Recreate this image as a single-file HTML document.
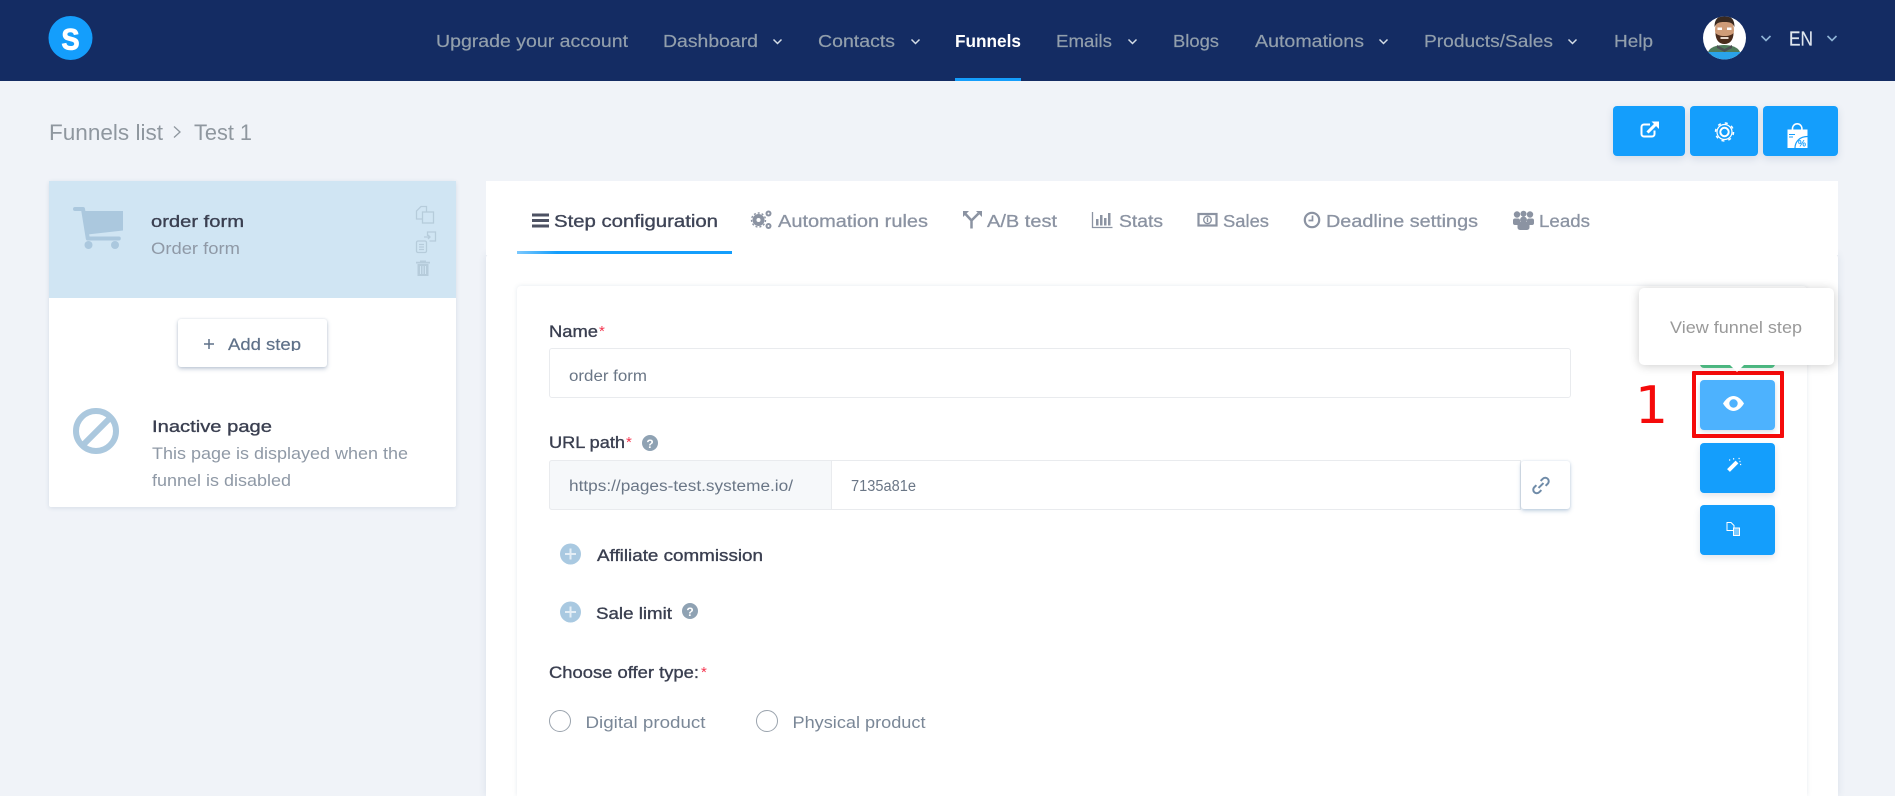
<!DOCTYPE html>
<html lang="en">
<head>
<meta charset="utf-8">
<title>Funnels - Test 1</title>
<style>
html,body{margin:0;padding:0;width:1895px;height:796px;overflow:hidden;background:#f0f3f8;font-family:"Liberation Sans",sans-serif}
#app{position:relative;width:1895px;height:796px;overflow:hidden;background:#f0f3f8}
.b{position:absolute;box-sizing:border-box}
svg{position:absolute;left:0;top:0}
text{font-family:"Liberation Sans",sans-serif}
.nv{font-size:17.5px;fill:#929fac;stroke:#929fac;stroke-width:.2}
.tb{font-size:17.5px;fill:#8b93a2;stroke:#8b93a2;stroke-width:.3}
.dk{font-size:17px;fill:#3a3f50;stroke:#3a3f50;stroke-width:.35}
.lt{font-size:16.5px;fill:#8f99a6}
.in{font-size:15.5px;fill:#6a7686}
.rq{font-size:15px;fill:#f5354f}
</style>
</head>
<body>
<div id="app">
<!-- nav -->
<div class="b" style="left:0;top:0;width:1895px;height:81px;background:#142c63"></div>
<div class="b" style="left:955px;top:78px;width:66px;height:3px;background:#149efc"></div>
<!-- top buttons -->
<div class="b" style="left:1613px;top:106px;width:72px;height:50px;background:#149efc;border-radius:4px;box-shadow:0 3px 8px rgba(60,90,130,.15)"></div>
<div class="b" style="left:1690px;top:106px;width:68px;height:50px;background:#149efc;border-radius:4px;box-shadow:0 3px 8px rgba(60,90,130,.15)"></div>
<div class="b" style="left:1763px;top:106px;width:75px;height:50px;background:#149efc;border-radius:4px;box-shadow:0 3px 8px rgba(60,90,130,.15)"></div>
<!-- left panel -->
<div class="b" style="left:49px;top:181px;width:407px;height:326px;background:#fff;border-radius:2px;box-shadow:0 1px 4px rgba(60,90,130,.14)"></div>
<div class="b" style="left:49px;top:181px;width:407px;height:117px;background:#d0e5f3"></div>
<div class="b" style="left:178px;top:319px;width:149px;height:48px;background:#fff;border-radius:3px;box-shadow:0 2px 4px rgba(60,90,130,.3),0 0 2px rgba(60,90,130,.15)"></div>
<!-- right panel -->
<div class="b" style="left:486px;top:254px;width:1352px;height:542px;background:#fff;border-radius:4px 4px 0 0;box-shadow:0 0 8px rgba(60,90,130,.12)"></div>
<div class="b" style="left:486px;top:181px;width:1352px;height:74px;background:#fff"></div>
<div class="b" style="left:517px;top:251px;width:215px;height:3px;background:linear-gradient(90deg,#7cc8fd 0,#149efc 40px)"></div>
<div class="b" style="left:517px;top:286px;width:1290px;height:510px;background:#fff;border-radius:4px 4px 0 0;box-shadow:0 0 5px rgba(60,90,130,.13)"></div>
<!-- inputs -->
<div class="b" style="left:549px;top:348px;width:1022px;height:50px;border:1px solid #e9ebee;border-radius:3px;background:#fff"></div>
<div class="b" style="left:549px;top:460px;width:972px;height:50px;border:1px solid #e9ebee;border-radius:3px 0 0 3px;background:#fff"></div>
<div class="b" style="left:549px;top:460px;width:283px;height:50px;border:1px solid #e9ebee;border-radius:3px 0 0 3px;background:#f6f8fa"></div>
<div class="b" style="left:1521px;top:461px;width:49px;height:48px;background:#fff;border-radius:3px;box-shadow:0 2px 4px rgba(60,110,160,.3),0 0 2px rgba(60,110,160,.15)"></div>
<!-- action buttons -->
<div class="b" style="left:1700px;top:340px;width:75px;height:28px;background:#54c98e;border-radius:4px"></div>
<div class="b" style="left:1700px;top:380px;width:75px;height:50px;background:#4db2fe;border-radius:4px;box-shadow:0 2px 5px rgba(60,90,130,.2)"></div>
<div class="b" style="left:1700px;top:443px;width:75px;height:50px;background:#149efc;border-radius:4px;box-shadow:0 3px 7px rgba(60,90,130,.15)"></div>
<div class="b" style="left:1700px;top:505px;width:75px;height:50px;background:#149efc;border-radius:4px;box-shadow:0 3px 7px rgba(60,90,130,.15)"></div>
<div class="b" style="left:1692px;top:371px;width:92px;height:67px;border:4px solid #f50a0a;border-radius:1px"></div>
<!-- tooltip -->
<div class="b" style="left:1639px;top:288px;width:195px;height:77px;background:#fff;border-radius:5px;box-shadow:0 1px 10px rgba(0,0,0,.2)"></div>
<div class="b" style="left:1730px;top:358px;width:14px;height:14px;background:#fff;clip-path:polygon(0 50%,100% 50%,50% 100%)"></div>

<svg width="1895" height="796" viewBox="0 0 1895 796">
<defs>
<clipPath id="ac"><circle cx="1724.5" cy="38" r="21.5"/></clipPath>
<clipPath id="cs"><rect x="220" y="330" width="90" height="21"/></clipPath>
</defs>
<!-- logo -->
<circle cx="70.5" cy="38" r="22" fill="#149efc"/>
<text x="61.5" y="49.500" font-size="30" font-weight="700" fill="#fff" stroke="#fff" stroke-width="1" textLength="18" lengthAdjust="spacingAndGlyphs">S</text>
<!-- nav text -->
<text class="nv" x="436" y="47" textLength="192" lengthAdjust="spacingAndGlyphs">Upgrade your account</text>
<text class="nv" x="663" y="47" textLength="95" lengthAdjust="spacingAndGlyphs">Dashboard</text>
<text class="nv" x="818" y="47" textLength="77" lengthAdjust="spacingAndGlyphs">Contacts</text>
<text x="955" y="47" font-size="17.5" font-weight="700" fill="#fff" textLength="66" lengthAdjust="spacingAndGlyphs">Funnels</text>
<text class="nv" x="1056" y="47" textLength="56" lengthAdjust="spacingAndGlyphs">Emails</text>
<text class="nv" x="1173" y="47" textLength="46" lengthAdjust="spacingAndGlyphs">Blogs</text>
<text class="nv" x="1255" y="47" textLength="109" lengthAdjust="spacingAndGlyphs">Automations</text>
<text class="nv" x="1424" y="47" textLength="129" lengthAdjust="spacingAndGlyphs">Products/Sales</text>
<text class="nv" x="1614" y="47" textLength="39" lengthAdjust="spacingAndGlyphs">Help</text>
<g fill="none" stroke="#d4dde6" stroke-width="1.500">
<path d="M773.500 39.500l4 4 4-4M911.500 39.500l4 4 4-4M1128.500 39.500l4 4 4-4M1379.500 39.500l4 4 4-4M1568.500 39.500l4 4 4-4"/>
</g>
<path d="M1761.500 36l4.500 4.500 4.500-4.500M1827.500 36l4.500 4.500 4.500-4.500" fill="none" stroke="#8fb4d6" stroke-width="1.600"/>
<text x="1789" y="45.500" font-size="20" fill="#dfe6ee" stroke="#dfe6ee" stroke-width=".15" textLength="24" lengthAdjust="spacingAndGlyphs">EN</text>
<!-- avatar -->
<g clip-path="url(#ac)">
<rect x="1703" y="16" width="43" height="44" fill="#fff"/>
<path d="M1708 52c2-5 9-7 16-7s14 2 16 7v3h-32z" fill="#4f7a5a"/>
<rect x="1703" y="52" width="43" height="8" fill="#2aa3ea"/>
<ellipse cx="1724.500" cy="30" rx="9.500" ry="13" fill="#cf9c78"/>
<path d="M1714.500 27c0-8 3.500-11 10-11s10 3 10 11c-2-4-4-5-10-5s-8 1-10 5z" fill="#3a2a20"/>
<path d="M1715.500 33c2 2 4.500 3 9 3s7-1 9-3c0 7-3.500 11-9 11s-9-4-9-11z" fill="#4a2c1c"/>
<rect x="1717.500" y="27.500" width="4.500" height="2.500" fill="#fff"/>
<rect x="1727" y="27.500" width="4.500" height="2.500" fill="#fff"/>
<rect x="1720.500" y="37" width="8" height="2" fill="#e9d8cc"/>
<path d="M1717 45l7.500 4 7.500-4v3l-7.500 4-7.500-4z" fill="#4b4f52"/>
</g>
<!-- breadcrumb -->
<text x="49" y="140" font-size="22" fill="#8f979f" textLength="114" lengthAdjust="spacingAndGlyphs">Funnels list</text>
<path d="M174 126.500l6 5.500-6 5.500" fill="none" stroke="#8f979f" stroke-width="1.300"/>
<text x="194" y="140" font-size="22" fill="#8f979f" textLength="58" lengthAdjust="spacingAndGlyphs">Test 1</text>
<!-- top btn icons -->
<path d="M1650 124.500h-6a2.500 2.500 0 0 0-2.500 2.500v7a2.500 2.500 0 0 0 2.500 2.500h8a2.500 2.500 0 0 0 2.500-2.500v-3.500" fill="none" stroke="#fff" stroke-width="2"/>
<path d="M1647.500 132.500l8-8" fill="none" stroke="#fff" stroke-width="3"/>
<path d="M1651.500 121.500h7.500v7.500z" fill="#fff"/>
<g fill="none" stroke="#fff">
<circle cx="1724.500" cy="132" r="4.200" stroke-width="2"/>
<circle cx="1724.500" cy="132" r="7.500" stroke-width="1.200"/>
<circle cx="1724.500" cy="132" r="9" stroke-width="1.500" stroke-dasharray="3 4.070"/>
</g>
<path d="M1787.500 129.500h20v18.500h-20z" fill="#fff"/>
<path d="M1792.500 130v-1.500a4.700 4.700 0 0 1 9.400 0v1.500" fill="none" stroke="#fff" stroke-width="1.600"/>
<path d="M1795 148c0-6.500 5-11.500 12.500-11.500" fill="none" stroke="#149efc" stroke-width="1.200"/>
<path d="M1789 134.500h6M1789 137h4" stroke="#149efc" stroke-width="1"/>
<text x="1798" y="146.500" font-size="9" font-weight="700" fill="#149efc" textLength="8" lengthAdjust="spacingAndGlyphs">%</text>
<!-- left panel -->
<path d="M84 211h39v19.500l-35.500 4z" fill="#abc8de"/>
<path d="M75 209h8l4.800 29.500h31" fill="none" stroke="#abc8de" stroke-width="4" stroke-linecap="round" stroke-linejoin="round"/>
<circle cx="88.500" cy="245" r="4" fill="#abc8de"/>
<circle cx="115" cy="245" r="4" fill="#abc8de"/>
<text class="dk" x="151" y="227" font-size="17.500" textLength="93" lengthAdjust="spacingAndGlyphs">order form</text>
<text class="lt" x="151" y="254" textLength="89" lengthAdjust="spacingAndGlyphs">Order form</text>
<g fill="none" stroke="#b6ccdb" stroke-width="1.300">
<path d="M422 219h-5.500v-8l4.500-4.500h5.500v5.500"/>
<rect x="422.500" y="212" width="11" height="11"/>
<rect x="416.500" y="241" width="10" height="11.500" rx="1.500"/>
<path d="M419 244.500h5M419 247h5M419 249.500h5M427.500 236v-4h8v9h-6M424 237h6M428 235l2 2-2 2"/>
</g>
<path d="M417.500 264h11v12h-11zM416 261.800h14v1.700h-14zM420 260.500h6v1.500h-6z" fill="#b6ccdb"/>
<path d="M420.500 266v8M423 266v8M425.500 266v8" stroke="#d0e5f3" stroke-width="1"/>
<path d="M204 344h10M209 339v10" stroke="#5f7189" stroke-width="1.500"/>
<text clip-path="url(#cs)" x="228" y="350" font-size="17" fill="#5f7189" stroke="#5f7189" stroke-width=".2" textLength="73" lengthAdjust="spacingAndGlyphs">Add step</text>
<circle cx="96" cy="431" r="20" fill="none" stroke="#abc8de" stroke-width="6"/>
<path d="M83 445l27-27" stroke="#abc8de" stroke-width="6"/>
<text class="dk" x="152" y="432" textLength="120" lengthAdjust="spacingAndGlyphs">Inactive page</text>
<text class="lt" x="152" y="459" textLength="256" lengthAdjust="spacingAndGlyphs">This page is displayed when the</text>
<text class="lt" x="152" y="486" textLength="139" lengthAdjust="spacingAndGlyphs">funnel is disabled</text>
<!-- tabs -->
<path d="M532 213.500h17v3h-17zM532 219h17v3h-17zM532 224.500h17v3h-17z" fill="#4d5263"/>
<text x="554" y="227" font-size="17.500" fill="#3f4557" stroke="#3f4557" stroke-width=".35" textLength="164" lengthAdjust="spacingAndGlyphs">Step configuration</text>
<g fill="#8b93a2">
<circle cx="758.500" cy="220" r="6"/>
<circle cx="768.500" cy="213.500" r="3"/>
<circle cx="768.500" cy="226" r="3"/>
</g>
<circle cx="758.500" cy="220" r="2" fill="#fff"/>
<circle cx="768.500" cy="213.500" r="1" fill="#fff"/>
<circle cx="768.500" cy="226" r="1" fill="#fff"/>
<circle cx="758.500" cy="220" r="7" fill="none" stroke="#8b93a2" stroke-width="1.400" stroke-dasharray="2 2"/>
<text class="tb" x="778" y="227" textLength="150" lengthAdjust="spacingAndGlyphs">Automation rules</text>
<path d="M971.500 228.500v-8l-6.500-7M971.500 220.500l7-7" fill="none" stroke="#8b93a2" stroke-width="2.500"/>
<path d="M963 211h6l-6 6zM982 211v6l-6-6z" fill="#8b93a2"/>
<text class="tb" x="987" y="227" textLength="70" lengthAdjust="spacingAndGlyphs">A/B test</text>
<path d="M1092.500 212v15.500h20" fill="none" stroke="#8b93a2" stroke-width="1.300"/>
<path d="M1096 219h2.500v6.500H1096zM1100 215h2.500v10.500h-2.500zM1104 218h2.500v7.500H1104zM1108 213h2.500v12.500H1108z" fill="#8b93a2"/>
<text class="tb" x="1119" y="227" textLength="44" lengthAdjust="spacingAndGlyphs">Stats</text>
<rect x="1198.500" y="214" width="18" height="11.500" fill="none" stroke="#8b93a2" stroke-width="2.200"/>
<circle cx="1207.500" cy="219.800" r="3.800" fill="none" stroke="#8b93a2" stroke-width="1.400"/>
<path d="M1207.500 217.500v4.500" stroke="#8b93a2" stroke-width="1.400"/>
<text class="tb" x="1223" y="227" textLength="46" lengthAdjust="spacingAndGlyphs">Sales</text>
<circle cx="1312" cy="220" r="7.200" fill="none" stroke="#8b93a2" stroke-width="2.200"/>
<path d="M1312.500 215.500v5h-4" fill="none" stroke="#8b93a2" stroke-width="1.700"/>
<text class="tb" x="1326" y="227" textLength="152" lengthAdjust="spacingAndGlyphs">Deadline settings</text>
<g fill="#8b93a2">
<circle cx="1517" cy="214.500" r="3.200"/><circle cx="1523.500" cy="213.800" r="3"/><circle cx="1530" cy="214.500" r="3.200"/>
<rect x="1513" y="218.500" width="7" height="6.500" rx="2"/><rect x="1527" y="218.500" width="7" height="6.500" rx="2"/>
<circle cx="1523.500" cy="220" r="3.500"/>
<rect x="1517.500" y="222" width="12" height="8" rx="2.500"/>
</g>
<text class="tb" x="1539" y="227" textLength="51" lengthAdjust="spacingAndGlyphs">Leads</text>
<!-- form -->
<text class="dk" x="549" y="337" textLength="49" lengthAdjust="spacingAndGlyphs">Name</text>
<text class="rq" x="599" y="336">*</text>
<text class="in" x="569" y="381" textLength="78" lengthAdjust="spacingAndGlyphs">order form</text>
<text class="dk" x="549" y="448" textLength="76" lengthAdjust="spacingAndGlyphs">URL path</text>
<text class="rq" x="626" y="447">*</text>
<circle cx="650" cy="443" r="8" fill="#8fa2b3"/>
<text x="650" y="448" font-size="12" font-weight="700" fill="#fff" text-anchor="middle">?</text>
<text class="in" x="569" y="491" textLength="224" lengthAdjust="spacingAndGlyphs">https://pages-test.systeme.io/</text>
<text class="in" x="851" y="491" textLength="65" lengthAdjust="spacingAndGlyphs">7135a81e</text>
<g transform="rotate(-45 1541 485.500)" fill="none" stroke="#6f8ba8" stroke-width="2">
<path d="M1538 482h-3a3.500 3.500 0 0 0 0 7h3"/>
<path d="M1544 482h3a3.500 3.500 0 0 1 0 7h-3"/>
<path d="M1537.500 485.500h7"/>
</g>
<circle cx="570.500" cy="554" r="10.500" fill="#a9c9e1"/>
<path d="M565 554h11M570.500 548.500v11" stroke="#e4eef6" stroke-width="2"/>
<text class="dk" x="597" y="561" textLength="166" lengthAdjust="spacingAndGlyphs">Affiliate commission</text>
<circle cx="570.500" cy="612" r="10.500" fill="#a9c9e1"/>
<path d="M565 612h11M570.500 606.500v11" stroke="#e4eef6" stroke-width="2"/>
<text class="dk" x="596" y="619" textLength="76" lengthAdjust="spacingAndGlyphs">Sale limit</text>
<circle cx="690" cy="611" r="8" fill="#8fa2b3"/>
<text x="690" y="616" font-size="12" font-weight="700" fill="#fff" text-anchor="middle">?</text>
<text class="dk" x="549" y="678" textLength="150" lengthAdjust="spacingAndGlyphs">Choose offer type:</text>
<text class="rq" x="701" y="677">*</text>
<circle cx="560" cy="721" r="10.500" fill="#fff" stroke="#9aa3ad" stroke-width="1"/>
<text x="585.500" y="728" font-size="17" fill="#7a8797" textLength="120" lengthAdjust="spacingAndGlyphs">Digital product</text>
<circle cx="767" cy="721" r="10.500" fill="#fff" stroke="#9aa3ad" stroke-width="1"/>
<text x="792.500" y="728" font-size="17" fill="#7a8797" textLength="133" lengthAdjust="spacingAndGlyphs">Physical product</text>
<!-- tooltip text -->
<text x="1670" y="333" font-size="16.500" fill="#999" textLength="132" lengthAdjust="spacingAndGlyphs">View funnel step</text>
<!-- annotation -->
<text x="1635" y="423" style="font-family:'DejaVu Sans',sans-serif" font-size="52" fill="#f50a0a">1</text>
<!-- action icons -->
<path d="M1723 403.500C1726 398.500 1730 396 1733.500 396S1741 398.500 1744 403.500C1741 408.500 1737 411 1733.500 411S1726 408.500 1723 403.500z" fill="#fff"/>
<circle cx="1733.500" cy="403.500" r="4.200" fill="#4db2fe"/>
<path d="M1728.500 470.500l8.500-8.500" stroke="#fff" stroke-width="4"/>
<path d="M1729 460h1.200M1733 458.800h1.200M1738.500 458.500h1.200M1740 464.500h1.200M1739.500 461.500h1" stroke="#fff" stroke-width="1.300"/>
<path d="M1727 522.500h4l3 3v5h-7z" fill="none" stroke="#fff" stroke-width="1"/>
<rect x="1733.500" y="528" width="6" height="7.500" fill="#7fcafc" stroke="#fff" stroke-width="1"/>
</svg>
</div>
</body>
</html>
